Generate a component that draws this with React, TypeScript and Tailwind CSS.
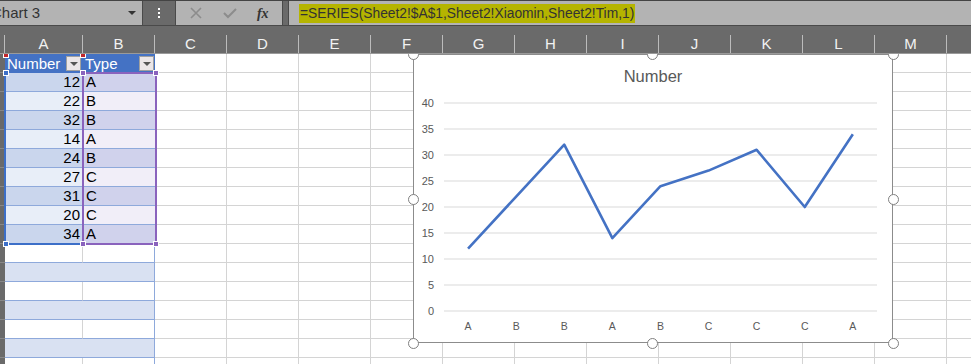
import React from 'react'

const numbers = [12, 22, 32, 14, 24, 27, 31, 20, 34]
const types = ['A', 'B', 'B', 'A', 'B', 'C', 'C', 'C', 'A']
const letters = ['C', 'D', 'E', 'F', 'G', 'H', 'I', 'J', 'K', 'L', 'M']

function TopBar() {
  return (
    <div className="h-[26px] bg-[#6a6a6a] border-t border-[#444] border-b border-b-[#4a4a4a] flex items-stretch">
      {/* Name box */}
      <div className="w-[143px] bg-[#b3b3b3] border-r border-[#4a4a4a] flex items-center overflow-hidden">
        <span className="ml-[-9px] text-[15px] text-[#333] flex-1 whitespace-nowrap">Chart 3</span>
        <span className="w-0 h-0 mr-[6px] border-l-[4px] border-r-[4px] border-t-[4px] border-l-transparent border-r-transparent border-t-[#333]" />
      </div>
      <div className="w-[32px] flex flex-col items-center justify-center gap-[2px]">
        <span className="w-[2px] h-[2px] bg-white" />
        <span className="w-[2px] h-[2px] bg-white" />
        <span className="w-[2px] h-[2px] bg-white" />
      </div>
      {/* Formula buttons */}
      <div className="w-[108px] bg-[#b3b3b3] border-x border-[#4a4a4a] flex items-center justify-around px-[4px]">
        <svg width="14" height="14" viewBox="0 0 14 14">
          <path d="M2 2 L12 12 M12 2 L2 12" stroke="#8c8c8c" strokeWidth="1.6" />
        </svg>
        <svg width="16" height="14" viewBox="0 0 16 14">
          <path d="M2 7 L6 11 L14 3" stroke="#8c8c8c" strokeWidth="2" fill="none" />
        </svg>
        <span className="font-['Liberation_Serif',serif] italic text-[14px] text-[#333] font-bold">fx</span>
      </div>
      <div className="w-[5px]" />
      {/* Formula input */}
      <div className="flex-1 bg-[#b3b3b3] border-l border-[#4a4a4a] flex items-center pl-[10px]">
        <span className="bg-[#b5b400] text-[#333] text-[13.8px] leading-[19px] px-[1px] whitespace-nowrap">
          =SERIES(Sheet2!$A$1,Sheet2!Xiaomin,Sheet2!Tim,1)
        </span>
      </div>
    </div>
  )
}

function ColumnHeader() {
  return (
    <div className="h-[28px] bg-[#6a6a6a] flex items-end border-b border-[#9a9a9a]">
      <div className="w-[5px] h-[18px] border-r border-[#bcbcbc]" />
      <div className="w-[78px] h-[18px] border-r border-[#bcbcbc] flex items-center justify-center text-[15px] text-[#f2f2f2]">A</div>
      <div className="w-[72px] h-[18px] border-r border-[#bcbcbc] flex items-center justify-center text-[15px] text-[#f2f2f2]">B</div>
      {letters.map((l) => (
        <div key={l} className="w-[72px] h-[18px] border-r border-[#bcbcbc] flex items-center justify-center text-[15px] text-[#f2f2f2]">
          {l}
        </div>
      ))}
      <div className="flex-1 h-[18px]" />
    </div>
  )
}

function Dropdown() {
  return (
    <span className="w-[15px] h-[15px] bg-[#ebe6e8] border border-[#a0a0a0] flex items-center justify-center">
      <span className="w-0 h-0 border-l-[4px] border-r-[4px] border-t-[4px] border-l-transparent border-r-transparent border-t-[#555]" />
    </span>
  )
}

function PlainCells() {
  return (
    <>
      {letters.map((l) => (
        <div key={l} className="w-[72px] border-r border-b border-[#d4d4d4]" />
      ))}
      <div className="flex-1 border-b border-[#d4d4d4]" />
    </>
  )
}

function Row({ r }: { r: number }) {
  let ab: React.ReactNode
  if (r === 0) {
    ab = (
      <>
        <div className="w-[78px] bg-[#4472c4] text-white flex items-center justify-between pl-[2px] pr-[2px]">
          <span>Number</span>
          <Dropdown />
        </div>
        <div className="w-[72px] bg-[#4472c4] text-white flex items-center justify-between pl-[2px] pr-[1px]">
          <span>Type</span>
          <Dropdown />
        </div>
      </>
    )
  } else if (r <= 9) {
    const odd = r % 2 === 1
    ab = (
      <>
        <div className={`w-[78px] border-b border-[#8ea9db] text-right pr-[3px] ${odd ? 'bg-[#cad6ed]' : 'bg-[#e8eef8]'}`}>
          {numbers[r - 1]}
        </div>
        <div className={`w-[72px] border-b border-[#8ea9db] pl-[3px] ${odd ? 'bg-[#d0d2ec]' : 'bg-[#f1eef8]'}`}>
          {types[r - 1]}
        </div>
      </>
    )
  } else if (r % 2 === 1) {
    ab = <div className="w-[150px] bg-[#d9e1f2] border-b border-r border-[#8ea9db]" />
  } else {
    ab = (
      <>
        <div className="w-[78px] border-b border-r border-b-[#8ea9db] border-r-[#d4d4d4]" />
        <div className="w-[72px] border-b border-r border-[#8ea9db]" />
      </>
    )
  }
  return (
    <div className="h-[19px] flex text-[15px] leading-[18px] text-black shrink-0">
      <div className="w-[5px] bg-[#6a6a6a] border-b border-[#888]" />
      {ab}
      <PlainCells />
    </div>
  )
}

function Handle({ x, y, color }: { x: number; y: number; color: string }) {
  return (
    <span
      className="absolute w-[6px] h-[6px] border border-white"
      style={{ left: x - 3, top: y - 3, background: color }}
    />
  )
}

function Chart() {
  const x0 = 31
  const step = 48.1
  const yOf = (v: number) => 257 - 5.2 * v
  const pts = numbers.map((v, i) => `${x0 + step / 2 + step * i},${yOf(v)}`).join(' ')
  const ticks = [40, 35, 30, 25, 20, 15, 10, 5, 0]
  const knobs = [
    [0, 0], [239, 0], [480, 0],
    [0, 145], [480, 145],
    [0, 289], [239, 289], [480, 289],
  ]
  return (
    <div className="absolute left-[413px] top-0 w-[480px] h-[289px]">
      <div className="w-full h-full bg-white border border-[#8c8c8c]">
        <svg width="478" height="287" viewBox="1 1 478 287" className="block">
          <text x="240" y="28" textAnchor="middle" fontSize="16.5" fill="#595959" fontFamily="Liberation Sans, Arial, sans-serif">
            Number
          </text>
          {ticks.map((t) => (
            <g key={t}>
              <line x1={x0} x2="464" y1={yOf(t)} y2={yOf(t)} stroke="#d9d9d9" strokeWidth="1" />
              <text x="21" y={yOf(t) + 4} textAnchor="end" fontSize="11" fill="#595959" fontFamily="Liberation Sans, Arial, sans-serif">
                {t}
              </text>
            </g>
          ))}
          {types.map((c, i) => (
            <text key={i} x={x0 + step / 2 + step * i} y="276" textAnchor="middle" fontSize="10.5" fill="#595959" fontFamily="Liberation Sans, Arial, sans-serif">
              {c}
            </text>
          ))}
          <polyline points={pts} fill="none" stroke="#4472c4" strokeWidth="2.6" strokeLinejoin="round" />
        </svg>
      </div>
      {knobs.map(([x, y], i) => (
        <span
          key={i}
          className="absolute w-[11px] h-[11px] rounded-full bg-white border-[1.5px] border-[#7f7f7f]"
          style={{ left: x - 5.5, top: y - 5.5 }}
        />
      ))}
    </div>
  )
}

export default function App() {
  const rows = Array.from({ length: 17 }, (_, i) => i)
  return (
    <div className="w-[971px] h-[364px] overflow-hidden bg-white font-['Liberation_Sans',Arial,sans-serif]">
      <TopBar />
      <ColumnHeader />
      <div className="relative h-[310px] overflow-hidden">
        {rows.map((r) => (
          <Row key={r} r={r} />
        ))}

        {/* series value range (blue) and category range (purple) */}
        <div className="absolute left-[4px] top-[18px] w-[80px] h-[173px] border-b-2 border-l-2 border-[#3c6fc8]" />
        <div className="absolute left-[82px] top-[18px] w-[75px] h-[173px] border-2 border-[#8a63bd]" />
        <Handle x={6} y={1} color="#c0262b" />
        <Handle x={83} y={1} color="#c0262b" />
        <Handle x={6} y={19} color="#3c6fc8" />
        <Handle x={6} y={190} color="#3c6fc8" />
        <Handle x={83} y={19} color="#8a63bd" />
        <Handle x={156} y={19} color="#8a63bd" />
        <Handle x={83} y={190} color="#8a63bd" />
        <Handle x={156} y={190} color="#8a63bd" />

        <Chart />
      </div>
    </div>
  )
}
